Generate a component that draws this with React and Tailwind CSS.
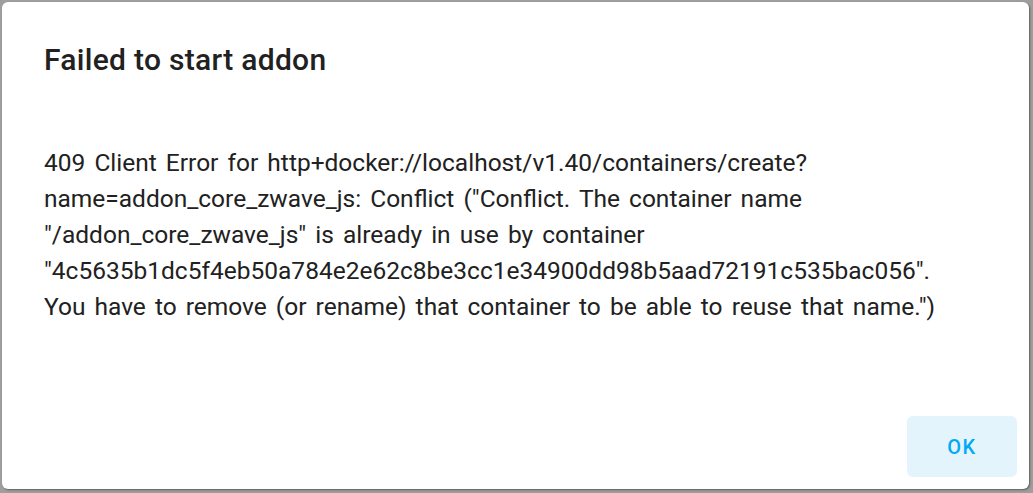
export default function App() {
  return (
    <div className="h-[493px] w-[1033px] bg-[#9e9e9e] pl-[2px] pt-[2px] overflow-hidden" style={{ fontFamily: 'Roboto, "Noto Sans", sans-serif' }}>
      <div className="flex h-[487px] w-[1027px] flex-col rounded-[6px] bg-white shadow-[1px_1px_2px_rgba(0,0,0,0.4)]">
        {/* Header */}
        <h2 className="pl-[42px] pt-[40px] text-[30px] leading-[36px] font-medium tracking-[0.3px] text-[#212121]">
          Failed to start addon
        </h2>

        {/* Body */}
        <div className="pl-[42px] pr-[20px] pt-[67px] text-[24.5px] leading-[36px] [word-spacing:3px] whitespace-nowrap text-[#212121]">
          409 Client Error for http+docker://localhost/v1.40/containers/create?
          <br />
          name=addon_core_zwave_js: Conflict ("Conflict. The container name
          <br />
          "/addon_core_zwave_js" is already in use by container
          <br />
          "4c5635b1dc5f4eb50a784e2e62c8be3cc1e34900dd98b5aad72191c535bac056".
          <br />
          You have to remove (or rename) that container to be able to reuse that name.")
        </div>

        {/* Actions */}
        <div className="mt-auto flex justify-end pb-[12px] pr-[12px]">
          <button className="h-[61px] w-[110px] rounded-[6px] bg-[#e4f4fd] text-[20px] font-medium tracking-[1.5px] text-[#03a9f4]">
            OK
          </button>
        </div>
      </div>
    </div>
  );
}
